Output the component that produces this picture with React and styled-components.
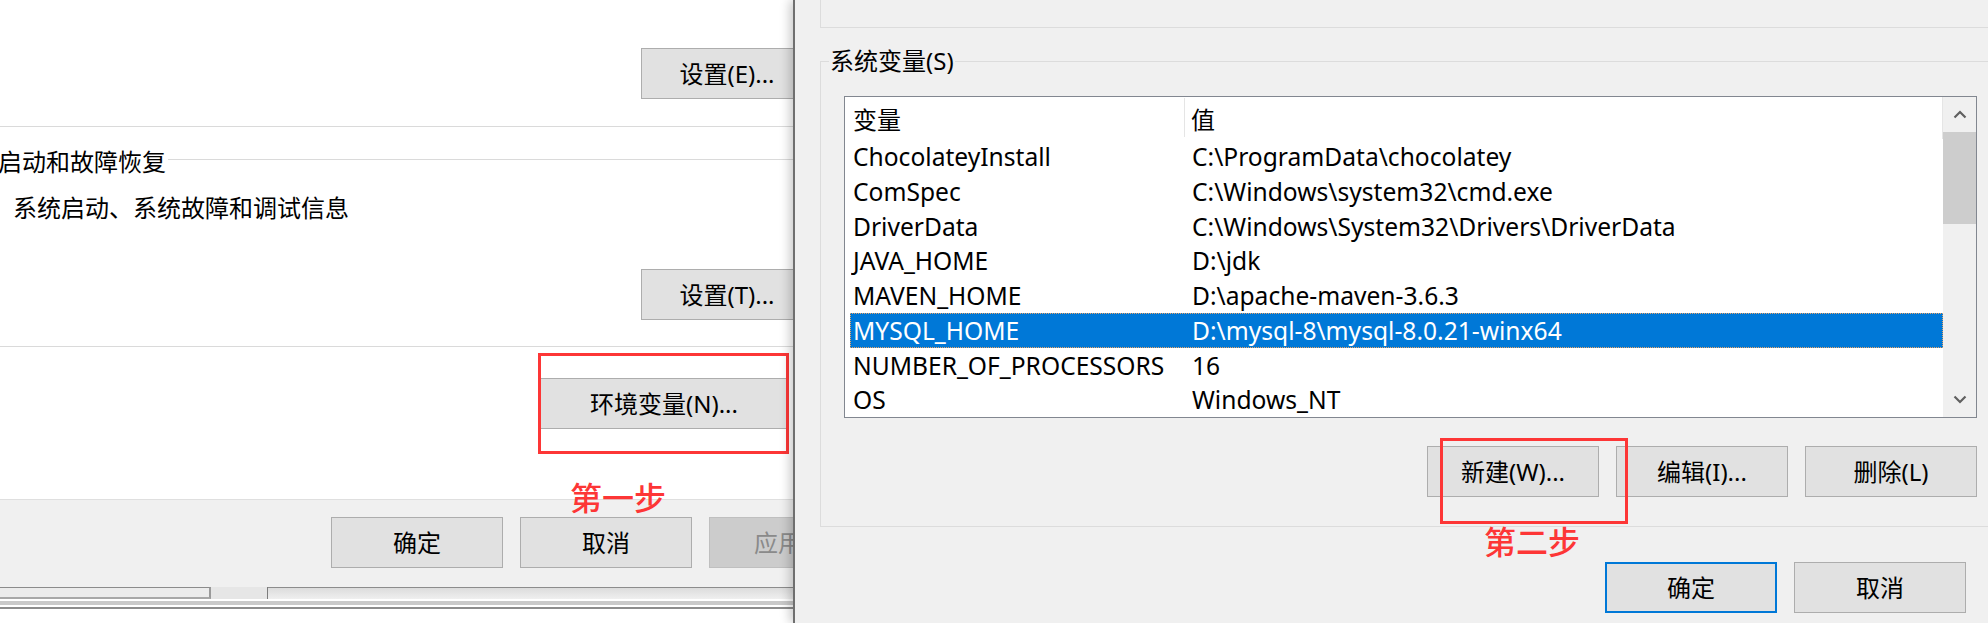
import React from "react";
import styled, { createGlobalStyle } from "styled-components";

const GlobalStyle = createGlobalStyle`
  html, body { margin: 0; padding: 0; background: #ffffff; }
  * { box-sizing: border-box; }
`;

const FONT = `"Noto Sans", "Noto Sans CJK SC", sans-serif`;
const RED = "#fd3636";

const Root = styled.div`
  display: flex;
  width: 1988px;
  height: 623px;
  overflow: hidden;
  background: #ffffff;
  font-family: ${FONT};
  color: #000;
`;

/* ---------- left (underlying) window ---------- */
const LeftPanel = styled.div`
  flex: none;
  width: 793px;
  height: 623px;
  display: flex;
  flex-direction: column;
`;

const LeftMain = styled.div`
  height: 499px;
  flex: none;
  padding-top: 48px;
  display: flex;
  flex-direction: column;
  background: #ffffff;
`;

const WinButton = styled.button`
  flex: none;
  width: ${(p) => p.$w || 172}px;
  height: ${(p) => p.$h || 51}px;
  padding: 0;
  margin: 0;
  font-family: ${FONT};
  font-size: 24px;
  line-height: 30px;
  color: ${(p) => (p.$disabled ? "#8a8a8a" : "#000")};
  background: ${(p) => (p.$disabled ? "#cccccc" : "#e1e1e1")};
  border: ${(p) =>
    p.$primary ? "2px solid #0078d7" : p.$disabled ? "1px solid #bfbfbf" : "1px solid #adadad"};
  white-space: nowrap;
  overflow: hidden;
  text-align: center;
`;

const EdgeRow = styled.div`
  display: flex;
  justify-content: flex-end;
  margin-top: ${(p) => p.$mt || 0}px;
  margin-right: -20px;
`;

const Divider = styled.div`
  height: 1px;
  flex: none;
  background: #dadada;
  margin-top: ${(p) => p.$mt || 0}px;
`;

const GroupTitleRow = styled.div`
  display: flex;
  height: 32px;
  margin-top: 19px;
`;

const GroupTitle = styled.span`
  font-size: 24px;
  line-height: 32px;
  margin-left: -2px;
  white-space: nowrap;
`;

const GroupLine = styled.div`
  flex: 1;
  height: 1px;
  margin-top: 13px;
  margin-left: 2px;
  background: #dadada;
`;

const Desc = styled.div`
  margin-top: 14px;
  margin-left: 13px;
  font-size: 24px;
  line-height: 32px;
  white-space: nowrap;
`;

const EnvRow = styled.div`
  display: flex;
  justify-content: flex-end;
  padding-right: 5px;
  margin-top: 31px;
`;

const Anchor = styled.div`
  position: relative;
  flex: none;
`;

const RedBox = styled.div`
  position: absolute;
  left: ${(p) => p.$x}px;
  top: ${(p) => p.$y}px;
  width: ${(p) => p.$w}px;
  height: ${(p) => p.$h}px;
  border: 3px solid ${RED};
  pointer-events: none;
`;

const Note = styled.div`
  position: absolute;
  left: ${(p) => p.$x}px;
  top: ${(p) => p.$y}px;
  font-size: 32px;
  line-height: 32px;
  font-weight: 500;
  color: ${RED};
  white-space: nowrap;
  font-family: "Noto Sans CJK SC", sans-serif;
`;

const BottomBar = styled.div`
  height: 88px;
  flex: none;
  border-top: 1px solid #dfdfdf;
  background: #f0f0f0;
  display: flex;
  gap: 17px;
  padding: 17px 0 0 331px;
`;

const UnderStrip = styled.div`
  flex: 1;
  display: flex;
  flex-direction: column;
  background: #ffffff;
`;

const TabRow = styled.div`
  display: flex;
  height: 12px;
  flex: none;
  background: #f0f0f0;
`;

const TabBox = styled.div`
  width: 211px;
  flex: none;
  border-top: 1px solid #8c8c8c;
  border-right: 2px solid #9a9a9a;
  border-bottom: 2px solid #a8a8a8;
  background: #ececec;
`;

const TabGap = styled.div`
  width: 57px;
  flex: none;
  background: #e6e6e6;
  border-right: 1px solid #7c7c7c;
`;

const TabRest = styled.div`
  flex: 1;
  border-top: 1px solid #8c8c8c;
  background: linear-gradient(#dcdcdc, #efefef);
`;

const Band = styled.div`
  flex: none;
  height: ${(p) => p.$h}px;
  margin-top: ${(p) => p.$mt || 0}px;
  background: ${(p) => p.$c};
`;

/* ---------- environment variables dialog ---------- */
const Dialog = styled.div`
  position: relative;
  z-index: 1;
  flex: none;
  width: 1232px;
  height: 623px;
  border-left: 2px solid #6f6f6f;
  background: #f0f0f0;
  box-shadow: -3px 0 10px rgba(0, 0, 0, 0.22);
  display: flex;
  flex-direction: column;
`;

const UpperGroup = styled.div`
  flex: none;
  height: 28px;
  margin: 0 25px;
  border: 1px solid #dcdcdc;
  border-top: none;
`;

const Group = styled.fieldset`
  margin: 17px 25px 0 25px;
  padding: 0;
  border: 1px solid #dcdcdc;
  min-width: 0;
`;

const Legend = styled.legend`
  margin-left: 8px;
  padding: 0 1px;
  font-size: 24px;
  line-height: 32px;
`;

const GroupInner = styled.div`
  padding: 19px 22px 29px 23px;
  display: flex;
  flex-direction: column;
`;

const ListView = styled.div`
  height: 322px;
  display: flex;
  border: 1px solid #828790;
  background: #ffffff;
`;

const Table = styled.div`
  flex: 1;
  min-width: 0;
  overflow: hidden;
  display: flex;
  flex-direction: column;
`;

const Header = styled.div`
  height: 42px;
  flex: none;
  display: flex;
  margin-left: 5px;
  border-right: 1px solid #e5e5e5;
`;

const HeadCell = styled.div`
  display: flex;
  align-items: center;
  padding: 2px 0 0 ${(p) => (p.$first ? 3 : 6)}px;
  width: ${(p) => (p.$first ? "335px" : "auto")};
  flex: ${(p) => (p.$first ? "none" : 1)};
  border-right: ${(p) => (p.$first ? "1px solid #e5e5e5" : "none")};
  font-size: 24px;
  margin: 1px 0 2px;
`;

const Row = styled.div`
  height: 34.8px;
  flex: none;
  display: flex;
  align-items: center;
  margin: 0 0 0 5px;
  font-size: 24.6px;
  white-space: nowrap;
  background: ${(p) => (p.$selected ? "#0078d7" : "transparent")};
  color: ${(p) => (p.$selected ? "#ffffff" : "#000")};
  border: 1px ${(p) => (p.$selected ? "dotted #e8a468" : "solid transparent")};
`;

const Cell = styled.div`
  flex: ${(p) => (p.$first ? "none" : 1)};
  width: ${(p) => (p.$first ? "335px" : "auto")};
  padding-left: ${(p) => (p.$first ? 2 : 6)}px;
  overflow: hidden;
`;

const ScrollBar = styled.div`
  flex: none;
  width: 33px;
  display: flex;
  flex-direction: column;
  background: #f0f0f0;
`;

const ScrollArrow = styled.div`
  height: 35px;
  flex: none;
  display: flex;
  align-items: center;
  justify-content: center;
`;

const Thumb = styled.div`
  height: 92px;
  flex: none;
  background: #cdcdcd;
`;

const Track = styled.div`
  flex: 1;
`;

const ActionRow = styled.div`
  display: flex;
  justify-content: flex-end;
  gap: 17px;
  margin-top: 28px;
`;

const DialogButtons = styled.div`
  display: flex;
  justify-content: flex-end;
  gap: 17px;
  padding-right: 59px;
  margin-top: 35px;
`;

const Chevron = ({ up }) => (
  <svg width="14" height="9" viewBox="0 0 14 9">
    <polyline
      points={up ? "1.5,7.5 7,2 12.5,7.5" : "1.5,1.5 7,7 12.5,1.5"}
      fill="none"
      stroke="#606060"
      strokeWidth="2.2"
    />
  </svg>
);

const vars = [
  ["ChocolateyInstall", "C:\\ProgramData\\chocolatey"],
  ["ComSpec", "C:\\Windows\\system32\\cmd.exe"],
  ["DriverData", "C:\\Windows\\System32\\Drivers\\DriverData"],
  ["JAVA_HOME", "D:\\jdk"],
  ["MAVEN_HOME", "D:\\apache-maven-3.6.3"],
  ["MYSQL_HOME", "D:\\mysql-8\\mysql-8.0.21-winx64"],
  ["NUMBER_OF_PROCESSORS", "16"],
  ["OS", "Windows_NT"],
];

export default function App() {
  return (
    <>
      <GlobalStyle />
      <Root>
        <LeftPanel>
          <LeftMain>
            <EdgeRow>
              <WinButton>设置(E)...</WinButton>
            </EdgeRow>
            <Divider $mt={27} />
            <GroupTitleRow>
              <GroupTitle>启动和故障恢复</GroupTitle>
              <GroupLine />
            </GroupTitleRow>
            <Desc>系统启动、系统故障和调试信息</Desc>
            <EdgeRow $mt={45}>
              <WinButton>设置(T)...</WinButton>
            </EdgeRow>
            <Divider $mt={26} />
            <EnvRow>
              <Anchor>
                <WinButton $w={248}>环境变量(N)...</WinButton>
                <RedBox $x={-2} $y={-25} $w={251} $h={101} />
                <Note $x={30} $y={102}>第一步</Note>
              </Anchor>
            </EnvRow>
          </LeftMain>
          <BottomBar>
            <WinButton>确定</WinButton>
            <WinButton>取消</WinButton>
            <WinButton $disabled $w={138}>应用</WinButton>
          </BottomBar>
          <UnderStrip>
            <TabRow>
              <TabBox />
              <TabGap />
              <TabRest />
            </TabRow>
            <Band $h={4} $mt={2} $c="#c9c9c9" />
            <Band $h={2} $mt={2} $c="#8c8c8c" />
          </UnderStrip>
        </LeftPanel>

        <Dialog>
          <UpperGroup />
          <Group>
            <Legend>系统变量(S)</Legend>
            <GroupInner>
              <ListView>
                <Table>
                  <Header>
                    <HeadCell $first>变量</HeadCell>
                    <HeadCell>值</HeadCell>
                  </Header>
                  {vars.map(([k, v]) => (
                    <Row key={k} $selected={k === "MYSQL_HOME"}>
                      <Cell $first>{k}</Cell>
                      <Cell>{v}</Cell>
                    </Row>
                  ))}
                </Table>
                <ScrollBar>
                  <ScrollArrow>
                    <Chevron up />
                  </ScrollArrow>
                  <Thumb />
                  <Track />
                  <ScrollArrow>
                    <Chevron />
                  </ScrollArrow>
                </ScrollBar>
              </ListView>
              <ActionRow>
                <Anchor>
                  <WinButton>新建(W)...</WinButton>
                  <RedBox $x={13} $y={-8} $w={188} $h={86} />
                  <Note $x={57} $y={78}>第二步</Note>
                </Anchor>
                <WinButton>编辑(I)...</WinButton>
                <WinButton>删除(L)</WinButton>
              </ActionRow>
            </GroupInner>
          </Group>
          <DialogButtons>
            <WinButton $primary>确定</WinButton>
            <WinButton>取消</WinButton>
          </DialogButtons>
        </Dialog>
      </Root>
    </>
  );
}
